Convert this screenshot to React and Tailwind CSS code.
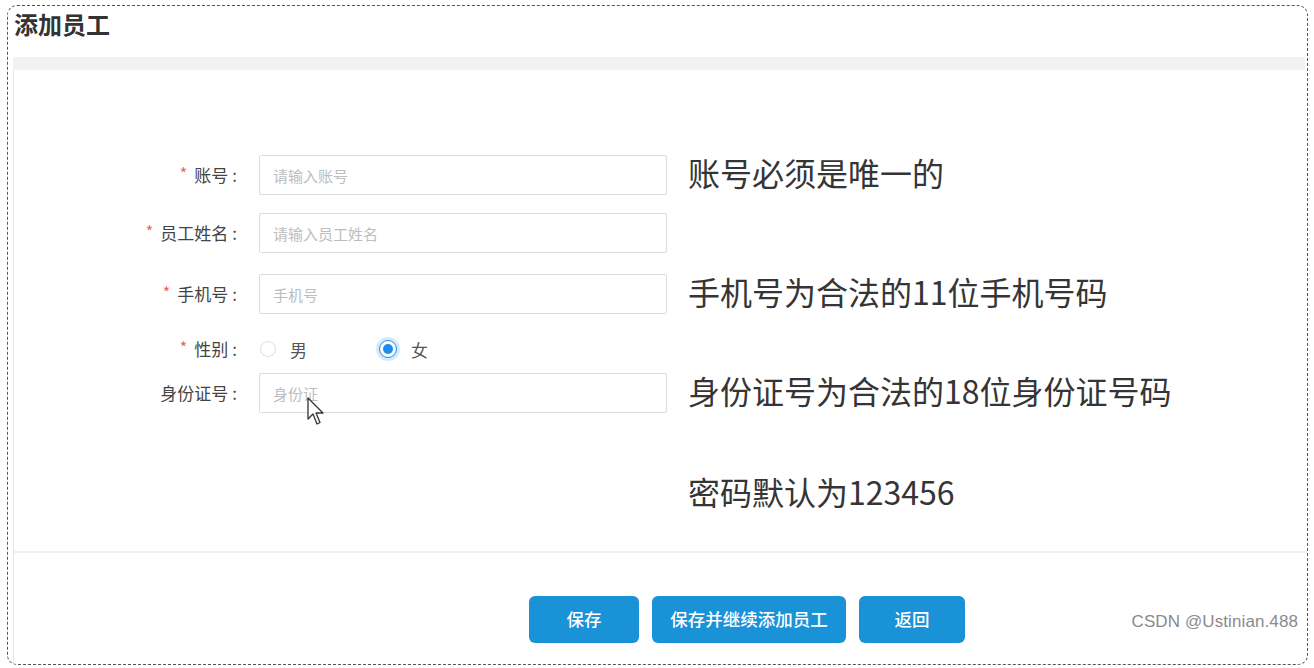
import React from 'react';

const font = { fontFamily: '"Noto Sans CJK SC", "Noto Sans", sans-serif' };

function Label({ required, text }) {
  return (
    <div className="w-[231px] shrink-0 flex items-center justify-end pr-[8px] text-[17px] text-[#444]">
      {required && <span className="text-[#f0625f] text-[16px] mr-[7px] -mt-[4px]">*</span>}
      <span>{text}</span>
      <span className="ml-[4px]">:</span>
    </div>
  );
}

function Hint({ children }) {
  return <div className="ml-[21px] pb-[6px] text-[32px] leading-none text-[#353535] whitespace-nowrap">{children}</div>;
}

function Field({ label, required, placeholder, hint, className = '' }) {
  return (
    <div className={`flex items-center h-[40px] ${className}`}>
      <Label required={required} text={label} />
      <input
        type="text"
        placeholder={placeholder}
        className="ml-[14px] w-[408px] h-[40px] shrink-0 border border-[#dcdcdc] rounded-[2px] px-[13px] text-[15px] text-[#333] placeholder:text-[#bdbdbd] outline-none bg-white"
      />
      {hint && <Hint>{hint}</Hint>}
    </div>
  );
}

function Radio({ checked, label }) {
  return (
    <div className="flex items-center">
      {checked ? (
        <span className="w-[18px] h-[18px] rounded-full border-[1.5px] border-[#1c8cf0] bg-white flex items-center justify-center shadow-[0_0_0_3px_rgba(28,140,240,0.18)]">
          <span className="w-[10px] h-[10px] rounded-full bg-[#1c8cf0]" />
        </span>
      ) : (
        <span className="w-[16px] h-[16px] rounded-full border border-[#e0e0e0] bg-white" />
      )}
      <span className="ml-[14px] text-[17px] text-[#555] mt-[2px]">{label}</span>
    </div>
  );
}

export default function App() {
  return (
    <div className="relative w-[1314px] h-[668px] bg-white pt-[5px] pl-[7px]" style={font}>
      <div className="w-[1301px] h-[660px] border border-dashed border-[#555] rounded-[10px] flex flex-col pl-[5px] overflow-hidden">
        <div className="h-[51px] shrink-0 pt-[1px] pl-[1px]">
          <h1 className="text-[24px] leading-[34px] font-bold text-[#333]">添加员工</h1>
        </div>
        <div className="h-[13px] shrink-0 bg-[#f2f2f2] mr-[2px]" />

        <div className="flex-1 flex flex-col border-l border-[#e6e6e6]">
          <div className="h-[483px] shrink-0 border-b-2 border-[#efefef] pt-[85px]">
            <Field label="账号" required placeholder="请输入账号" hint="账号必须是唯一的" />
            <Field label="员工姓名" required placeholder="请输入员工姓名" className="mt-[18px]" />
            <Field label="手机号" required placeholder="手机号" hint="手机号为合法的11位手机号码" className="mt-[21px]" />

            <div className="flex items-center h-[24px] mt-[23px]">
              <Label required text="性别" />
              <div className="ml-[15px] flex items-center">
                <Radio label="男" />
                <div className="ml-[72px]">
                  <Radio checked label="女" />
                </div>
              </div>
            </div>

            <Field label="身份证号" placeholder="身份证" hint="身份证号为合法的18位身份证号码" className="mt-[12px]" />

            <div className="flex items-center h-[40px] mt-[61px]">
              <div className="w-[231px] shrink-0" />
              <div className="ml-[14px] w-[408px] shrink-0" />
              <Hint>密码默认为123456</Hint>
            </div>
          </div>

          <div className="flex-1 pt-[43px] pl-[515px] flex gap-[13px]">
            <button className="w-[110px] h-[47px] rounded-[6px] bg-[#1a92d8] text-white text-[17.5px] font-medium">保存</button>
            <button className="w-[194px] h-[47px] rounded-[6px] bg-[#1a92d8] text-white text-[17.5px] font-medium">保存并继续添加员工</button>
            <button className="w-[106px] h-[47px] rounded-[6px] bg-[#1a92d8] text-white text-[17.5px] font-medium">返回</button>
          </div>
        </div>
      </div>

      <div
        className="absolute right-[16px] bottom-[34px] text-[17px] text-[#8a8a8a] tracking-[0.1px]"
        style={{ fontFamily: '"Liberation Sans", "Noto Sans", sans-serif' }}
      >
        CSDN @Ustinian.488
      </div>

      <svg className="absolute left-[307px] top-[397px]" width="20" height="30" viewBox="0 0 20 30">
        <path d="M1 1 L1 22 L6 17 L10 27 L13 25.5 L9 16 L16 16 Z" fill="#fff" stroke="#333" strokeWidth="1.3" strokeLinejoin="round" />
      </svg>
    </div>
  );
}
